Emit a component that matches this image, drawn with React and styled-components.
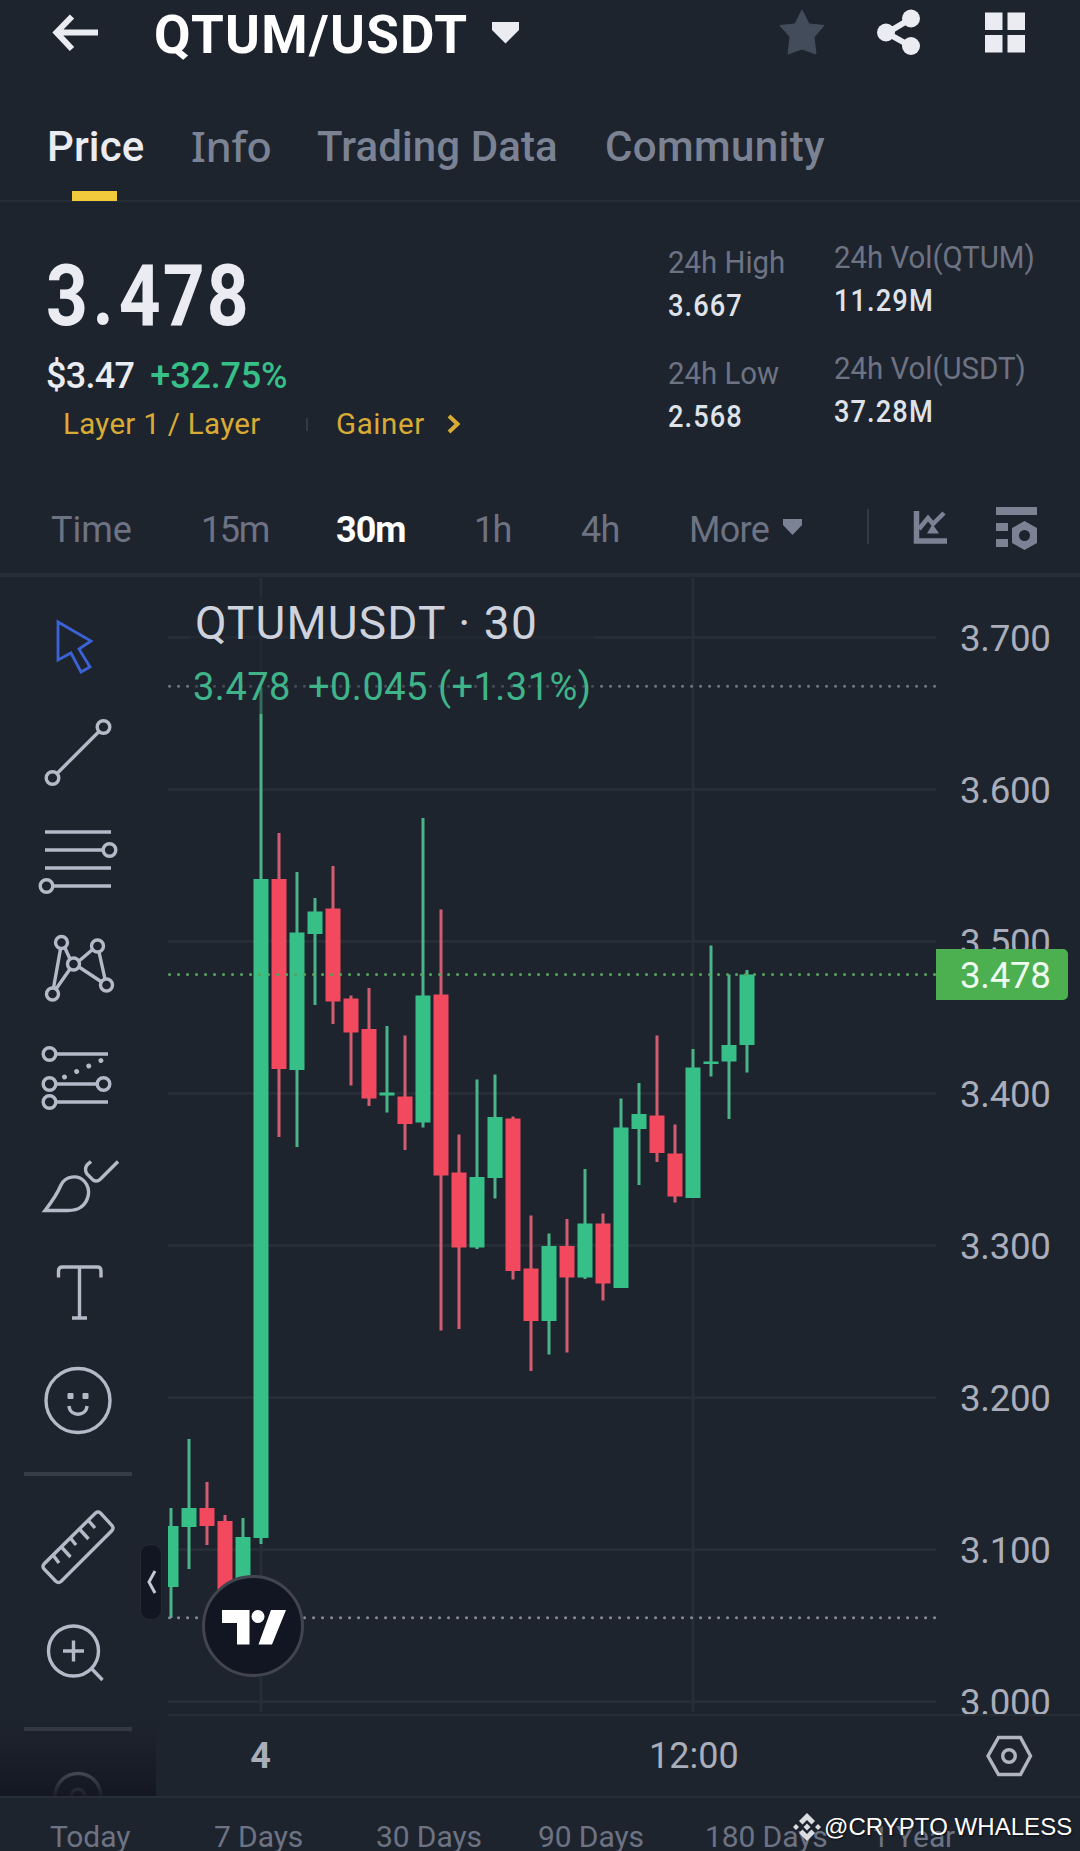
import styled, { createGlobalStyle, css } from "styled-components";

const colors = {
  bg: "#1e242e",
  line: "#262d37",
  text: "#eaecf2",
  muted: "#7b8293",
  dim: "#6d7383",
  icon: "#b4bac7",
  green: "#36bf87",
  red: "#f2495f",
  yellow: "#d9ab35",
};

const GlobalStyle = createGlobalStyle`
  * {
    box-sizing: border-box;
  }
  body {
    margin: 0;
    background: ${colors.bg};
    font-family: Roboto, "Noto Sans", sans-serif;
    overflow: hidden;
  }
  svg {
    display: block;
  }
`;

const Page = styled.div`
  width: 1080px;
  height: 1851px;
  display: flex;
  flex-direction: column;
  position: relative;
  overflow: hidden;
  background: ${colors.bg};
  color: ${colors.text};
  white-space: nowrap;
`;

/* header */
const Header = styled.header`
  height: 71px;
  flex: none;
  display: flex;
  align-items: flex-start;
  padding: 0 54px 0 52px;
`;
const BackIcon = styled.svg`
  width: 48px;
  height: 40px;
  margin-top: 12px;
`;
const Pair = styled.h1`
  margin: 0 0 0 54px;
  width: 334px;
  font-size: 53px;
  line-height: 71px;
  font-weight: 700;
  letter-spacing: 1.3px;
  color: #fff;
`;
const PairCaret = styled.svg`
  width: 32px;
  height: 24px;
  margin-top: 21px;
`;
const HeaderIcons = styled.div`
  flex: 1;
  display: flex;
  justify-content: flex-end;
  padding-top: 8px;

  svg:nth-child(2) {
    margin: 0 60px 0 48px;
  }
`;

/* tabs */
const Tabs = styled.nav`
  height: 131px;
  flex: none;
  display: grid;
  grid-template-columns: 144px 126px 288px auto;
  padding: 49px 0 0 47px;
  border-bottom: 2px solid ${colors.line};
`;
const Tab = styled.div`
  position: relative;
  height: 80px;
  font-size: 42px;
  line-height: 54px;
  font-weight: 500;
  letter-spacing: ${(props) => props.spacing || 0}px;
  color: ${(props) => (props.active ? colors.text : colors.muted)};
  ${(props) =>
    props.slab &&
    css`
      font-family: "Noto Sans", sans-serif;
      line-height: 52px;
    `}
  ${(props) =>
    props.active &&
    css`
      &::after {
        content: "";
        position: absolute;
        left: 25px;
        bottom: -1px;
        width: 45px;
        height: 10px;
        background: #f2cb3c;
      }
    `}
`;

/* ticker summary */
const Summary = styled.section`
  height: 273px;
  flex: none;
  display: grid;
  grid-template-columns: 622px 166px 1fr;
  padding-left: 46px;
`;
const LastPrice = styled.div`
  margin-top: 44px;
  height: 100px;
  font-size: 86px;
  line-height: 100px;
  font-weight: 700;
  letter-spacing: 2.4px;
  transform: scaleX(0.85);
  transform-origin: left;
`;
const Point = styled.span`
  margin: 0 3.5px 0 3px;
`;
const PriceRow = styled.div`
  display: flex;
  gap: 16px;
  margin-top: 9px;
  height: 42px;
  font-size: 36px;
  line-height: 42px;
  font-weight: 500;
`;
const Fiat = styled.span`
  letter-spacing: -0.7px;
`;
const Change = styled.span`
  color: ${colors.green};
  letter-spacing: -0.2px;
`;
const TagRow = styled.div`
  display: flex;
  align-items: center;
  height: 42px;
  margin-top: 6px;
  padding-left: 17px;
  font-size: 29.5px;
  line-height: 42px;
  color: ${colors.yellow};
`;
const Tag = styled.span`
  width: ${(props) => props.width}px;
  letter-spacing: ${(props) => props.spacing}px;
`;
const TagDivider = styled.span`
  width: 2px;
  height: 13px;
  margin-right: 28px;
  background: #333a46;
`;
const StatColumn = styled.div`
  padding-top: ${(props) => props.top}px;
`;
const StatLabel = styled.div`
  height: 44px;
  font-size: 31px;
  line-height: 44px;
  color: ${colors.dim};
  transform: scaleX(0.948);
  transform-origin: left;
`;
const StatValue = styled.div`
  height: 43px;
  margin-bottom: 24px;
  font-size: 31px;
  line-height: 42px;
  font-weight: 500;
  letter-spacing: 1.2px;
  color: #dfe3e9;
  transform: scaleX(0.88);
  transform-origin: left;
`;

/* interval bar */
const Intervals = styled.div`
  height: 102px;
  flex: none;
  display: grid;
  grid-template-columns: 150px 135px 138px 107px 108px 93px 85px 46px 82px auto;
  align-items: start;
  padding: 34px 0 0 51px;
  border-bottom: 4px solid ${colors.line};
`;
const Interval = styled.div`
  font-size: 36px;
  line-height: 42px;
  font-weight: ${(props) => (props.active ? 700 : 400)};
  letter-spacing: ${(props) => props.spacing || 0}px;
  color: ${(props) => (props.active ? "#fff" : colors.dim)};
`;
const MoreCaret = styled.svg`
  width: 22px;
  height: 18px;
  margin-top: 9px;
`;
const IntervalDivider = styled.div`
  width: 2px;
  height: 35px;
  background: #333a45;
`;
const ChartIcon = styled.svg`
  width: 36px;
  height: 40px;
  margin-top: -2px;
`;
const SettingsIcon = styled.svg`
  width: 44px;
  height: 46px;
  margin-top: -3px;
`;

/* chart */
const ChartArea = styled.main`
  height: 1220px;
  flex: none;
  display: grid;
  grid-template-columns: 168px 912px;
  margin-top: 1px;
  border-bottom: 2px solid ${colors.line};
`;
const Sidebar = styled.aside`
  position: relative;
  width: 156px;
  height: 1218px;
  display: flex;
  flex-direction: column;
  overflow: hidden;
`;
const Tool = styled.div`
  flex: none;
  height: ${(props) => props.height}px;
`;
const ToolDivider = styled.div`
  flex: none;
  width: 108px;
  height: 4px;
  margin-left: 24px;
  background: #363d48;
`;
const ToolFade = styled.div`
  position: absolute;
  left: 0;
  bottom: 0;
  width: 156px;
  height: 76px;
  background: linear-gradient(rgba(22, 25, 36, 0), rgba(20, 23, 34, 0.95));
`;
const Collapse = styled.button`
  position: absolute;
  left: 140px;
  top: 1544px;
  width: 22px;
  height: 76px;
  display: flex;
  align-items: center;
  justify-content: center;
  padding: 0;
  border: 1px solid #252a35;
  border-radius: 10px;
  background: #121622;
`;
const ChartColumn = styled.div`
  position: relative;
`;
const Legend = styled.div`
  position: absolute;
  left: 22px;
  top: 18px;
  width: 404px;
  height: 118px;
  padding-left: 3px;
  background: rgba(30, 36, 46, 0.5);
`;
const LegendTitle = styled.div`
  height: 54px;
  padding-left: 2px;
  font-size: 46px;
  line-height: 55px;
  letter-spacing: 1.15px;
  color: #ced2dc;
`;
const LegendValues = styled.div`
  display: flex;
  gap: 17px;
  margin-top: 15px;
  height: 44px;
  font-size: 38px;
  line-height: 44px;
  letter-spacing: 0.5px;
  color: #3fb489;
`;
const TvBadge = styled.div`
  position: absolute;
  left: 34px;
  top: 997px;
  width: 102px;
  height: 102px;
  border: 3px solid #42444f;
  border-radius: 50%;
  background: #121622;
`;
const TimeAxis = styled.div`
  display: grid;
  grid-template-columns: 106px 419px 294px 1fr;
  height: 82px;
  border-top: 2px solid ${colors.line};
  padding-top: 19px;
  font-size: 36px;
  line-height: 42px;
  color: #a9aeba;
`;
const TimeLabel = styled.div`
  grid-column: ${(props) => (props.bold ? 1 : 2)};
  font-weight: ${(props) => (props.bold ? 700 : 400)};
  text-align: right;
  padding-right: ${(props) => (props.bold ? 3 : 0)}px;
  ${(props) =>
    !props.bold &&
    css`
      padding-left: 375px;
      text-align: left;
    `}
`;
const AxisSettings = styled.svg`
  grid-column: 4;
  width: 48px;
  height: 44px;
  margin: -2px 0 0 -1px;
`;

/* footer */
const Ranges = styled.footer`
  height: 53px;
  flex: none;
  display: grid;
  grid-template-columns: 164px 162px 162px 167px 167px auto;
  padding: 17px 0 0 50px;
`;
const Range = styled.div`
  font-size: 30px;
  line-height: 44px;
  color: ${colors.dim};
  letter-spacing: -0.1px;
`;
const Watermark = styled.div`
  position: absolute;
  left: 792px;
  top: 1812px;
  display: flex;
  align-items: center;
  gap: 2px;
  height: 30px;
  font: 24px/30px "Liberation Sans", Arial, sans-serif;
  letter-spacing: 0.05px;
  color: #fff;
  text-shadow: 1px 1px 2px rgba(0, 0, 0, 0.7);
`;

// [x, high, bodyTop, bodyBottom, low, up] in page pixels
const candles = [
  [171, 1508, 1526, 1587, 1618, 1],
  [189, 1439, 1508, 1527, 1569, 1],
  [207, 1482, 1508, 1526, 1545, 0],
  [225, 1515, 1521, 1600, 1600, 0],
  [243, 1518, 1537, 1590, 1590, 1],
  [261, 687, 879, 1538, 1544, 1],
  [279, 833, 879, 1069, 1137, 0],
  [297, 872, 932.5, 1070, 1147, 1],
  [315, 898, 911.5, 934, 1005, 1],
  [333, 866, 908.5, 1001.5, 1024, 0],
  [351, 995.5, 998.5, 1032.5, 1085.5, 0],
  [369, 988, 1029, 1098.5, 1106, 0],
  [387, 1026, 1092.5, 1095.5, 1112.5, 1],
  [405, 1035.5, 1096.5, 1124, 1150, 0],
  [423, 818, 995.5, 1122.5, 1127.5, 1],
  [441, 909.5, 994.5, 1175.5, 1330.5, 0],
  [459, 1134.5, 1172.5, 1247.5, 1329, 0],
  [477, 1079.5, 1177, 1247.5, 1249, 1],
  [495, 1074.5, 1117, 1178, 1198.5, 1],
  [513, 1116.5, 1118.5, 1271, 1279.5, 0],
  [531, 1215.5, 1268.5, 1321, 1371, 0],
  [549, 1233.5, 1246, 1321, 1354.5, 1],
  [567, 1219, 1246, 1277.5, 1352.5, 0],
  [585, 1169, 1223.5, 1277.5, 1279, 1],
  [603, 1213.5, 1223.5, 1283.5, 1300.5, 0],
  [621, 1098.5, 1127.5, 1288, 1288, 1],
  [639, 1083, 1114, 1129, 1185, 1],
  [657, 1035.5, 1115.5, 1153, 1162, 0],
  [675, 1124.5, 1153.5, 1196.5, 1202.5, 0],
  [693, 1049, 1067.5, 1198, 1198, 1],
  [711, 945.5, 1061.5, 1064, 1076.5, 1],
  [729, 974.5, 1045, 1061.5, 1119, 1],
  [747, 970, 974.5, 1045, 1072.5, 1],
];

const gridRows = ["3.700", "3.600", "3.500", "3.400", "3.300", "3.200", "3.100", "3.000"];
const rowY = (i) => 637.3 + i * 152.05;

function DottedLine({ y, color }) {
  return (
    <line
      x1="169.5"
      x2="937"
      y1={y}
      y2={y}
      stroke={color}
      strokeWidth="3"
      strokeLinecap="round"
      strokeDasharray="0.1 8.9"
    />
  );
}

function CandleChart() {
  return (
    <svg width="912" height="1136" viewBox="168 578 912 1136">
      <g stroke="#272e38" strokeWidth="2.8">
        {gridRows.map((label, i) => (
          <line key={label} x1="168" x2="936" y1={rowY(i)} y2={rowY(i)} />
        ))}
        <line x1="261" x2="261" y1="578" y2="1712" />
        <line x1="693" x2="693" y1="578" y2="1712" />
      </g>
      {candles.map(([x, high, top, bottom, low, up]) => (
        <g key={x} fill={up ? colors.green : colors.red}>
          <rect x={x - 1.5} y={high} width="3" height={low - high} fill={up ? "#4bb38a" : "#d45c70"} />
          <rect x={x - 7.5} y={top} width="15" height={bottom - top} />
        </g>
      ))}
      <DottedLine y={686.3} color="#6f7580" />
      <DottedLine y={974.5} color="#55a35c" />
      <DottedLine y={1617.7} color="#858a94" />
      <g fill="#a9aeba" fontSize="36.700" letterSpacing="-0.3">
        {gridRows.map((label, i) => (
          <text key={label} x="960" y={rowY(i) + 13.2}>
            {label}
          </text>
        ))}
      </g>
      <path d="M936 949h127a5 5 0 0 1 5 5v41a5 5 0 0 1-5 5H936z" fill="#4caf50" />
      <text x="960" y="988" fontSize="36.700" letterSpacing="-0.3" fill="#eefbee">
        3.478
      </text>
    </svg>
  );
}

// drawing tools, every one on its own slice of the 156px wide rail
const tools = [
  {
    top: 578,
    height: 122,
    draw: (
      <path
        d="M58 622V660L71 653L81 672L90 667L79 649L91 641Z"
        stroke="#3c63d6"
        strokeWidth="2.8"
      />
    ),
  },
  {
    top: 700,
    height: 108,
    draw: (
      <>
        <circle cx="103.5" cy="727" r="6.3" />
        <circle cx="52.5" cy="778" r="6.3" />
        <path d="M57 773.5L99 731.5" />
      </>
    ),
  },
  {
    top: 808,
    height: 110,
    draw: (
      <>
        <path d="M45 832H111M45 850H102M45 868H111M53 886H111" />
        <circle cx="109.5" cy="850" r="6.3" />
        <circle cx="46.5" cy="886" r="6.3" />
      </>
    ),
  },
  {
    top: 918,
    height: 110,
    draw: (
      <>
        <circle cx="61.5" cy="942.5" r="6" />
        <circle cx="97.5" cy="946" r="6" />
        <circle cx="73.5" cy="964" r="6" />
        <circle cx="106.5" cy="985" r="6" />
        <circle cx="52.5" cy="994" r="6" />
        <path d="M60.5 949L53.5 988M65 948L70 959M70 969L56 989M79 961L92 950M79 967L101 981.5M99 952L105 979" />
      </>
    ),
  },
  {
    top: 1028,
    height: 112,
    draw: (
      <>
        <circle cx="49.5" cy="1054" r="6.3" />
        <circle cx="49.5" cy="1084" r="6.3" />
        <circle cx="49.5" cy="1102" r="6.3" />
        <circle cx="103.5" cy="1084" r="6.3" />
        <path d="M56 1054H108M56 1084H97M56 1102H108" />
        <path d="M64.5 1077L101 1060.5" strokeWidth="4.8" strokeLinecap="round" strokeDasharray="0.1 13.2" />
      </>
    ),
  },
  {
    top: 1140,
    height: 108,
    draw: (
      <path d="M45 1210.5C54 1199 58 1192 61 1185C65 1176 78 1174 84.500 1181.500C92 1190 88 1202 81 1207C77 1210 73 1210.500 68 1210.500ZM91 1161.500L87 1165C85 1168 85 1171 87 1174L93 1180C96 1182 98 1181.500 100.500 1179L118 1161.500" />
    ),
  },
  {
    top: 1248,
    height: 100,
    draw: <path d="M58.500 1277.500V1271Q58.500 1267 62.500 1267H97.500Q101 1267 101 1271V1277.500M79.500 1267V1318M72 1318H87" />,
  },
  {
    top: 1348,
    height: 124,
    draw: (
      <>
        <circle cx="78" cy="1400.500" r="32" />
        <path d="M69 1406C70 1417 86 1417 87 1406" />
        <rect x="67.500" y="1393" width="6" height="6" rx="1" fill={colors.icon} stroke="none" />
        <rect x="82.500" y="1393" width="6" height="6" rx="1" fill={colors.icon} stroke="none" />
      </>
    ),
  },
  { divider: true },
  {
    top: 1476,
    height: 124,
    draw: (
      <>
        <path d="M95.500 1513Q98 1511 100.500 1513L112 1525.500Q114 1528 112 1530.500L61 1581.500Q58.500 1583.500 56 1581.500L44 1569Q42 1566.500 44 1564Z" />
        <path d="M53 1555L59 1563M61 1546.500L70.500 1557M70 1537.500L76 1545M79 1528.500L88.500 1539M88 1520L95 1528" />
      </>
    ),
  },
  {
    top: 1600,
    height: 127,
    draw: (
      <>
        <circle cx="73.500" cy="1651" r="25" />
        <path d="M63 1651H84M73.500 1640.500V1661.500M91 1668L102.500 1680" />
      </>
    ),
  },
  { divider: true },
  {
    top: 1731,
    height: 65,
    draw: (
      <g stroke="#a0a5b0">
        <path d="M55 1796C57 1766 99 1766 101 1796" />
        <path d="M71 1796C73 1787 83 1787 85 1796" />
      </g>
    ),
  },
];

function ToolRail() {
  return (
    <Sidebar>
      {tools.map((tool, i) =>
        tool.divider ? (
          <ToolDivider key={i} />
        ) : (
          <Tool key={i} height={tool.height}>
            <svg
              width="156"
              height={tool.height}
              viewBox={`0 ${tool.top} 156 ${tool.height}`}
              fill="none"
              stroke={colors.icon}
              strokeWidth="3.4"
            >
              {tool.draw}
            </svg>
          </Tool>
        )
      )}
      <ToolFade />
    </Sidebar>
  );
}

function App() {
  return (
    <>
      <GlobalStyle />
      <Page>
        <Header>
          <BackIcon viewBox="0 0 48 40" fill="none" stroke={colors.text} strokeWidth="6">
            <path d="M46 20.500H5M20 4.500L4.500 20.500L20 37" />
          </BackIcon>
          <Pair>QTUM/USDT</Pair>
          <PairCaret viewBox="0 0 32 24">
            <path d="M4 1H31V9L17.500 22.500L4 9Z" fill={colors.text} />
          </PairCaret>
          <HeaderIcons>
            <svg width="48" height="48" viewBox="0 0 48 48">
              <path
                d="M24 2L31 16L46 17.500L36 29L38 46L24 41L10 46L12 29L2 17.500L17 16Z"
                fill="#434c5b"
                stroke="#434c5b"
                strokeLinejoin="round"
              />
            </svg>
            <svg width="48" height="48" viewBox="0 0 48 48" fill={colors.text}>
              <path d="M38 10L13 25L38 39" fill="none" stroke={colors.text} strokeWidth="6" />
              <circle cx="37" cy="10.500" r="9" />
              <circle cx="12" cy="24.500" r="9" />
              <circle cx="37" cy="38" r="9" />
            </svg>
            <svg width="44" height="48" viewBox="0 0 44 48" fill={colors.text}>
              <path d="M3 4.500H20.500V22H3ZM25.500 4.500H43V22H25.500ZM3 27H20.500V44.500H3ZM25.500 27H43V44.500H25.500Z" />
            </svg>
          </HeaderIcons>
        </Header>

        <Tabs>
          <Tab active spacing={0.1}>Price</Tab>
          <Tab slab spacing={-0.3}>Info</Tab>
          <Tab spacing={0.1}>Trading Data</Tab>
          <Tab spacing={0.4}>Community</Tab>
        </Tabs>

        <Summary>
          <div>
            <LastPrice>
              3<Point>.</Point>478
            </LastPrice>
            <PriceRow>
              <Fiat>$3.47</Fiat>
              <Change>+32.75%</Change>
            </PriceRow>
            <TagRow>
              <Tag width={243} spacing={0.3}>Layer 1 / Layer</Tag>
              <TagDivider />
              <Tag width={111} spacing={0.6}>Gainer</Tag>
              <svg width="16" height="22" viewBox="0 0 16 22">
                <path d="M2 3L10.500 11L2 19" fill="none" stroke={colors.yellow} strokeWidth="4" />
              </svg>
            </TagRow>
          </div>
          <StatColumn top={39}>
            <StatLabel>24h High</StatLabel>
            <StatValue>3.667</StatValue>
            <StatLabel>24h Low</StatLabel>
            <StatValue>2.568</StatValue>
          </StatColumn>
          <StatColumn top={34}>
            <StatLabel>24h Vol(QTUM)</StatLabel>
            <StatValue>11.29M</StatValue>
            <StatLabel>24h Vol(USDT)</StatLabel>
            <StatValue>37.28M</StatValue>
          </StatColumn>
        </Summary>

        <Intervals>
          <Interval>Time</Interval>
          <Interval spacing={-1.4}>15m</Interval>
          <Interval active spacing={-1}>30m</Interval>
          <Interval spacing={-1.8}>1h</Interval>
          <Interval spacing={-0.8}>4h</Interval>
          <Interval spacing={-0.7}>More</Interval>
          <MoreCaret viewBox="0 0 22 18">
            <path d="M1 1H20V7L10.500 17L1 7Z" fill={colors.muted} />
          </MoreCaret>
          <IntervalDivider />
          <ChartIcon viewBox="0 0 36 40" fill="none" stroke={colors.muted} strokeWidth="5.500">
            <path d="M3.500 4V34H34" />
            <path d="M6 22L15 11L20 17L31 6" strokeWidth="4.500" />
            <path d="M19.500 17L26 26.500H14Z" fill={colors.muted} stroke="none" />
          </ChartIcon>
          <SettingsIcon viewBox="0 0 44 46" fill={colors.muted}>
            <path d="M1 1H42V9H1ZM1 17H13V25H1ZM1 33H13V41H1Z" />
            <path
              fillRule="evenodd"
              d="M29.500 15L42 22V37L29.500 44L17 37V22ZM29.500 24A5.500 5.500 0 1 0 29.500 35A5.500 5.500 0 1 0 29.500 24Z"
            />
          </SettingsIcon>
        </Intervals>

        <ChartArea>
          <ToolRail />
          <ChartColumn>
            <CandleChart />
            <Legend>
              <LegendTitle>QTUMUSDT · 30</LegendTitle>
              <LegendValues>
                <span>3.478</span>
                <span>+0.045 (+1.31%)</span>
              </LegendValues>
            </Legend>
            <TvBadge>
              <svg width="96" height="96" viewBox="0 0 96 96" fill="#fff">
                <path d="M17 32H44.500V66.500H32V45H17Z" />
                <circle cx="53" cy="38.500" r="6.500" />
                <path d="M66 32H81L67 66.500H53.500Z" />
              </svg>
            </TvBadge>
            <TimeAxis>
              <TimeLabel bold>4</TimeLabel>
              <TimeLabel>12:00</TimeLabel>
              <AxisSettings viewBox="0 0 48 44" fill="none" stroke="#b0b5c0" strokeWidth="3.400">
                <path d="M12.500 4.500H34.500L44.500 23L34.500 41.500H12.500L2 23Z" />
                <circle cx="23" cy="23" r="6.300" />
              </AxisSettings>
            </TimeAxis>
          </ChartColumn>
        </ChartArea>
        <Collapse>
          <svg width="12" height="26" viewBox="0 0 12 26" fill="none" stroke="#c3c7d0" strokeWidth="3">
            <path d="M10 2L4 13L10 24" />
          </svg>
        </Collapse>

        <Ranges>
          <Range>Today</Range>
          <Range>7 Days</Range>
          <Range>30 Days</Range>
          <Range>90 Days</Range>
          <Range>180 Days</Range>
          <Range>1 Year</Range>
        </Ranges>

        <Watermark>
          <svg width="30" height="30" viewBox="0 0 30 30" fill="#dcdde0">
            <path d="M15 1L23 9L19.500 12.500L15 8L10.500 12.500L7 9ZM15 29L23 21L19.500 17.500L15 22L10.500 17.500L7 21ZM15 11.500L18.500 15L15 18.500L11.500 15ZM4 12L7 15L4 18L1 15ZM26 12L29 15L26 18L23 15Z" />
          </svg>
          <span>@CRYPTO WHALESS</span>
        </Watermark>
      </Page>
    </>
  );
}

export default App;
